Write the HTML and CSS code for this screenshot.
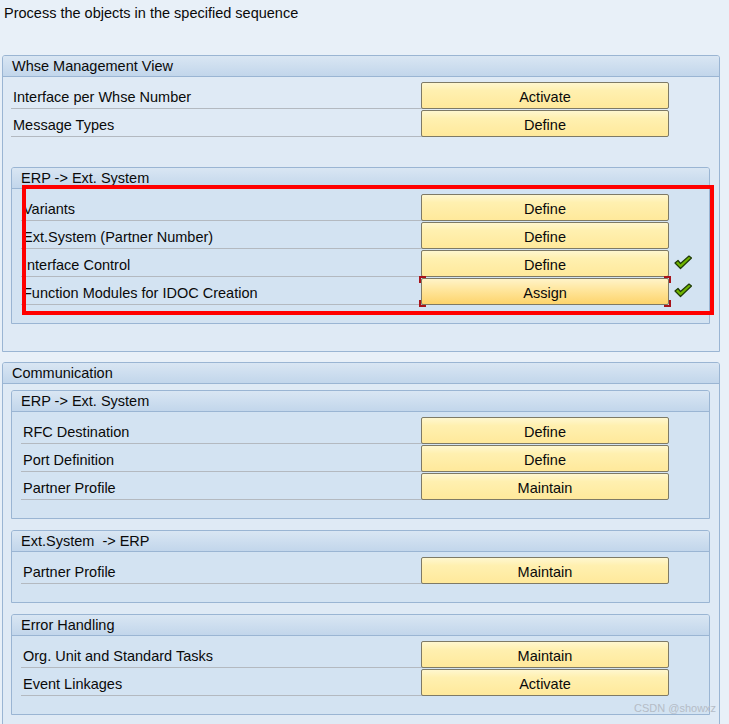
FILE: index.html
```html
<!DOCTYPE html>
<html>
<head>
<meta charset="utf-8">
<link rel="stylesheet" href="styles.css">
</head>
<body>
<div class="page">
  <div class="title">Process the objects in the specified sequence</div>

  <section class="group outer">
    <div class="ghead">Whse Management View</div>
    <div class="gbody">
      <div class="row"><span class="lbl">Interface per Whse Number</span><span class="btn">Activate</span></div>
      <div class="row"><span class="lbl">Message Types</span><span class="btn">Define</span></div>
      <section class="group inner first-gap">
        <div class="ghead">ERP -&gt; Ext. System</div>
        <div class="gbody">
          <div class="row"><span class="lbl">Variants</span><span class="btn">Define</span></div>
          <div class="row"><span class="lbl">Ext.System (Partner Number)</span><span class="btn">Define</span></div>
          <div class="row"><span class="lbl">Interface Control</span><span class="btn">Define</span><span class="mark"><svg width="18" height="15" viewBox="0 0 18 15"><path d="M1 8 L4 5.5 L6.5 8.5 L15 1 L17.5 3 L6.5 13.5 Z" fill="#6fb400" stroke="#1e3a06" stroke-width="1.2" stroke-linejoin="round"/></svg></span></div>
          <div class="row"><span class="lbl">Function Modules for IDOC Creation</span><span class="btn focus">Assign<i class="c tl"></i><i class="c tr"></i><i class="c bl"></i><i class="c br"></i></span><span class="mark"><svg width="18" height="15" viewBox="0 0 18 15"><path d="M1 8 L4 5.5 L6.5 8.5 L15 1 L17.5 3 L6.5 13.5 Z" fill="#6fb400" stroke="#1e3a06" stroke-width="1.2" stroke-linejoin="round"/></svg></span></div>
        </div>
      </section>
    </div>
  </section>

  <section class="group outer second">
    <div class="ghead">Communication</div>
    <div class="gbody">
      <section class="group inner">
        <div class="ghead">ERP -&gt; Ext. System</div>
        <div class="gbody">
          <div class="row"><span class="lbl">RFC Destination</span><span class="btn">Define</span></div>
          <div class="row"><span class="lbl">Port Definition</span><span class="btn">Define</span></div>
          <div class="row"><span class="lbl">Partner Profile</span><span class="btn">Maintain</span></div>
        </div>
      </section>
      <section class="group inner">
        <div class="ghead">Ext.System&nbsp; -&gt; ERP</div>
        <div class="gbody">
          <div class="row"><span class="lbl">Partner Profile</span><span class="btn">Maintain</span></div>
        </div>
      </section>
      <section class="group inner">
        <div class="ghead">Error Handling</div>
        <div class="gbody">
          <div class="row"><span class="lbl">Org. Unit and Standard Tasks</span><span class="btn">Maintain</span></div>
          <div class="row"><span class="lbl">Event Linkages</span><span class="btn">Activate</span></div>
        </div>
      </section>
    </div>
  </section>

  <div class="redbox"></div>
  <div class="watermark">CSDN @showxz</div>
</div>
</body>
</html>
```

FILE: styles.css
```css
html, body {
  margin: 0;
  padding: 0;
  background: #e8f0f8;
  height: 724px;
  overflow: hidden;
}
.page {
  position: relative;
  font-family: "Liberation Sans", Arial, sans-serif;
  font-size: 14.5px;
  color: #0a0a0a;
  padding: 0 9px 0 2px;
}
.title {
  height: 26px;
  line-height: 26px;
  padding-left: 2px;
  margin-bottom: 29px;
}
.group {
  border: 1px solid #9ab5d3;
  border-radius: 3px 3px 0 0;
}
.outer { background: #dfeaf5; }
.outer > .gbody { padding: 5px 9px 27px 8px; }
.outer.second { margin-top: 10px; }
.outer > .gbody > .row { --lw: 410px; }
.ghead {
  height: 20px;
  line-height: 20px;
  border-bottom: 1px solid #9ab5d3;
  background: linear-gradient(#d9e6f3, #c2d6eb);
  padding-left: 9px;
  border-radius: 2px 2px 0 0;
}
.inner {
  background: #d3e3f2;
  margin-bottom: 11px;
}
.inner:last-child { margin-bottom: 0; }
.outer.second > .gbody { padding-top: 6px; padding-bottom: 20px; }
.first-gap { margin-top: 29px; }
.inner > .gbody { padding: 5px 9px 17px 9px; }
.inner .row { --lw: 400px; }
.row {
  display: flex;
  height: 28px;
  align-items: flex-start;
}
.lbl {
  width: var(--lw);
  height: 24px;
  padding-top: 2px;
  line-height: 27px;
  border-bottom: 1px solid #b3b9c0;
  padding-left: 2px;
  box-sizing: content-box;
  flex: none;
  white-space: nowrap;
  overflow: visible;
  margin-right: -2px;
}
.btn {
  position: relative;
  width: 246px;
  height: 23px;
  padding-top: 2px;
  line-height: 25px;
  text-align: center;
  border: 1px solid #7e7a66;
  border-radius: 2px;
  background: linear-gradient(#fff7cf 0%, #fff0b0 30%, #ffe99b 100%);
  flex: none;
}
.btn.focus {
  background: linear-gradient(#fff3c8 0%, #ffe7a0 40%, #fdd46c 100%);
}
.c {
  position: absolute;
  width: 5px;
  height: 5px;
  border: 0 solid #a8131a;
}
.c.tl { left: -3px; top: -3px; border-left-width: 2px; border-top-width: 2px; }
.c.tr { right: -3px; top: -3px; border-right-width: 2px; border-top-width: 2px; }
.c.bl { left: -3px; bottom: -3px; border-left-width: 2px; border-bottom-width: 2px; }
.c.br { right: -3px; bottom: -3px; border-right-width: 2px; border-bottom-width: 2px; }
.mark {
  margin-left: 5px;
  padding-top: 5px;
  display: flex;
}
.redbox {
  position: absolute;
  left: 22px;
  top: 185px;
  width: 684px;
  height: 122px;
  border: 4px solid #ff0000;
}
.watermark {
  position: absolute;
  left: 634px;
  top: 702px;
  font-size: 11px;
  color: #b5bcc6;
}
```
